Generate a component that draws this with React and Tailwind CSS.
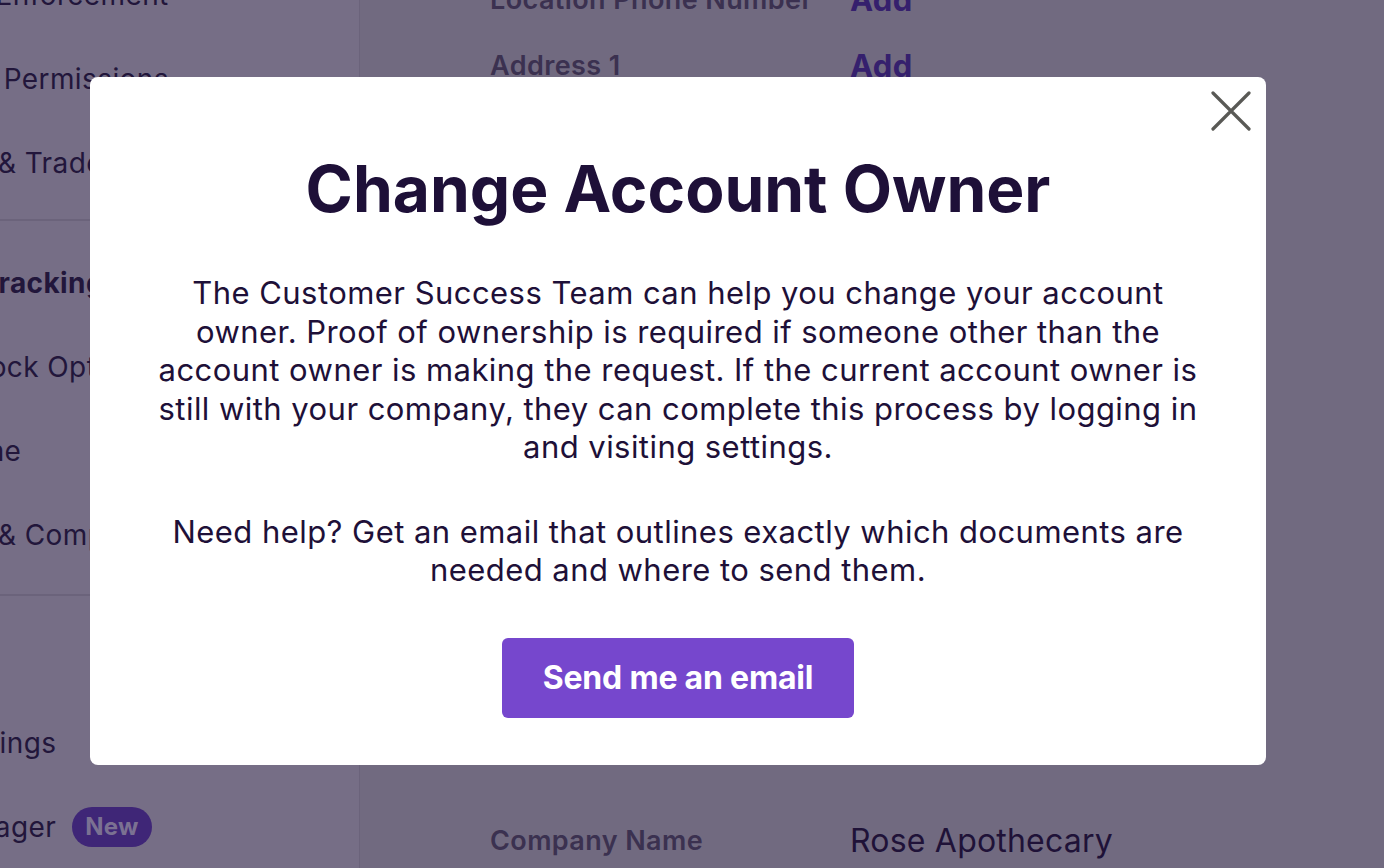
import React from "react";

const font = { fontFamily: "Inter, 'Noto Sans', sans-serif" };

function SideItem({ text, offset, bold, children }) {
  return (
    <div className="h-[84px] flex items-center whitespace-nowrap">
      <span
        className={`text-[28px] text-[#22163b] tracking-[0.4px] ${bold ? "font-bold" : "font-normal"}`}
        style={{ marginLeft: offset }}
      >
        {text}
      </span>
      {children}
    </div>
  );
}

export default function App() {
  return (
    <div className="relative w-[1384px] h-[868px] overflow-hidden flex" style={font}>
      {/* Sidebar (dimmed) */}
      <div className="w-[360px] shrink-0 bg-[#766e86] border-r border-[#6b637b] overflow-hidden">
        <div className="-mt-[47px]">
          <SideItem text="Time Enforcement" offset={-80} />
          <SideItem text="& Permissions" offset={-23} />
          <SideItem text="& Trademarks" offset={-2} />
          <div className="h-[16px] border-b-2 border-[#6b637b]" />
          <div className="h-[20px]" />
          <SideItem text="Tracking" offset={-19} bold />
          <SideItem text="Stock Options" offset={-38} />
          <SideItem text="Time" offset={-46} />
          <SideItem text="& Compensation" offset={-2} />
          <div className="h-[19px] border-b-2 border-[#6b637b]" />
          <div className="h-[105px]" />
          <SideItem text="Settings" offset={-54} />
          <SideItem text="Manager" offset={-64}>
            <span className="ml-[16px] rounded-full bg-[#3f2677] px-[13px] py-[2px] text-[24px] font-bold text-[#7b7192] tracking-[0.3px]">
              New
            </span>
          </SideItem>
        </div>
      </div>

      {/* Main content (dimmed) */}
      <div className="flex-1 bg-[#716a80] pl-[130px]">
        <div className="-mt-[33px]">
          <div className="h-[66px] flex items-center">
            <span className="w-[360px] text-[27px] font-semibold text-[#3b3150] tracking-[0.4px]">Location Phone Number</span>
            <span className="text-[31px] font-bold text-[#35206d] tracking-[0.4px]">Add</span>
          </div>
          <div className="h-[66px] flex items-center">
            <span className="w-[360px] text-[27px] font-semibold text-[#3b3150] tracking-[0.4px]">Address 1</span>
            <span className="text-[31px] font-bold text-[#35206d] tracking-[0.4px]">Add</span>
          </div>
        </div>
        <div className="mt-[718px] flex items-center">
          <span className="w-[360px] text-[27px] font-semibold text-[#3b3150] tracking-[0.4px]">Company Name</span>
          <span className="text-[32px] text-[#1f1238] tracking-[0.2px]">Rose Apothecary</span>
        </div>
      </div>

      {/* Modal */}
      <div className="absolute inset-0 pl-[90px] pt-[77px]">
        <div className="relative w-[1176px] h-[688px] bg-white rounded-[8px] flex flex-col items-center pt-[73px]">
          <button className="absolute top-[14px] right-[15px] w-[40px] h-[40px] flex items-center justify-center">
            <svg width="40" height="40" viewBox="0 0 40 40" fill="none">
              <path d="M2 2 L38 38 M38 2 L2 38" stroke="#595955" strokeWidth="3.2" strokeLinecap="round" />
            </svg>
          </button>
          <h1 className="text-[64px] leading-[77px] font-bold text-[#1e1038]">
            Change Account Owner
          </h1>
          <p className="mt-[47px] w-[1048px] text-[31px] leading-[38.5px] text-[#1e1038] text-center tracking-[0.45px]">
            The Customer Success Team can help you change your account owner. Proof of ownership is required if someone other than the account owner is making the request. If the current account owner is still with your company, they can complete this process by logging in and visiting settings.
          </p>
          <p className="mt-[46px] w-[1048px] text-[31px] leading-[38.5px] text-[#1e1038] text-center tracking-[0.45px]">
            Need help? Get an email that outlines exactly which documents are needed and where to send them.
          </p>
          <button className="mt-[48px] w-[352px] h-[80px] rounded-[6px] bg-[#7647cd] text-white text-[32px] font-bold tracking-[-0.2px]">
            Send me an email
          </button>
        </div>
      </div>
    </div>
  );
}
